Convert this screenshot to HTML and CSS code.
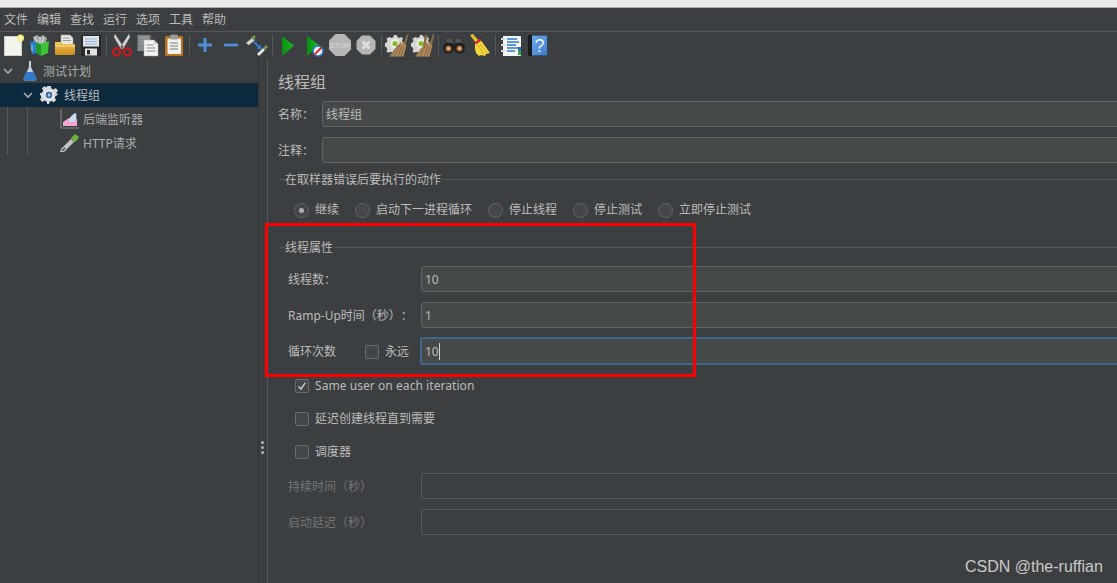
FILE: index.html
```html
<!DOCTYPE html>
<html lang="zh">
<head>
<meta charset="utf-8">
<title>Apache JMeter</title>
<link rel="stylesheet" href="styles.css">
</head>
<body>
<svg class="defs" aria-hidden="true">
  <defs>
    <linearGradient id="gPlay" x1="0" y1="0" x2="1" y2="0"><stop offset="0" stop-color="#0a8f14"/><stop offset="1" stop-color="#12b81e"/></linearGradient>
    <linearGradient id="gFolder" x1="0" y1="0" x2="0" y2="1"><stop offset="0" stop-color="#f5c75a"/><stop offset="1" stop-color="#c98a1c"/></linearGradient>
    <linearGradient id="gHelp" x1="0" y1="0" x2="1" y2="1"><stop offset="0" stop-color="#6ea6ea"/><stop offset="1" stop-color="#3f7fd0"/></linearGradient>
    <symbol id="gearBroom" viewBox="0 0 24 24">
      <path d="M9 2l2.500 0 1 2 2 1 2-1 1.500 1.500-1 2 1 2 2 1v3l-2 .8-1 2 .8 2-2 1.500-2-1-2 .8-.8 2h-3l-.8-2-2-.8-2 1-1.800-1.500 1-2-.8-2-2-.8v-3l2-1 .8-2-1-2L4.500 4l2 1 2-1z" fill="#d6d6d2"/>
      <circle cx="10" cy="10.500" r="4.500" fill="#eeeeea"/>
      <circle cx="10" cy="10.500" r="2.600" fill="#7fc02c"/>
      <path d="M18 12L22 1l1.500.5-3 11.500z" fill="#8a6a44"/>
    </symbol>
    <symbol id="bristle" viewBox="0 0 24 24">
      <path d="M15.500 9l6 3.500-3 11H4z" fill="#b08a5e"/>
      <path d="M15 12l-6 11M17 13l-4 10M19 14l-3 9M13 12l-7 11" stroke="#7c5c38" stroke-width=".8" fill="none"/>
    </symbol>
  </defs>
</svg>

<div class="app">
  <div class="topstrip"></div>

  <nav class="menubar">
    <span class="menu-item">文件</span>
    <span class="menu-item">编辑</span>
    <span class="menu-item">查找</span>
    <span class="menu-item">运行</span>
    <span class="menu-item">选项</span>
    <span class="menu-item">工具</span>
    <span class="menu-item">帮助</span>
  </nav>

  <div class="toolbar">
    <span class="tool"><svg class="ic" viewBox="0 0 24 24"><rect x="3.500" y="3.500" width="17" height="19" fill="#f4f4ee" stroke="#cfcfc8"/><circle cx="19.500" cy="5" r="3.500" fill="#f7ef7a"/><circle cx="19.500" cy="5" r="1.600" fill="#fffbd0"/><path d="M5.500 8v.1M5.500 18v.1" stroke="#999" stroke-width="1.500"/></svg></span>
    <span class="tool"><svg class="ic" viewBox="0 0 24 24"><path d="M6 4l4-2 3 2 3-2 4 3-2 8H8z" fill="#9ea8a4"/><path d="M8 4l2 5M13 4v6M17 4l-2 6" stroke="#d8dcda" stroke-width="1.200"/><path d="M3 9l6-1 1 12-5 1z" fill="#2a7fc9"/><path d="M9 10l5 1 0 12-5-3z" fill="#1f9a2e"/><path d="M14 11l8-3-1 12-7 3z" fill="#3fc23a"/><path d="M5 12v6" stroke="#99d0f5" stroke-width="1.200"/></svg></span>
    <span class="tool"><svg class="ic" viewBox="0 0 24 24"><path d="M8 2h9l3 3v7H8z" fill="#e9e9e4" stroke="#a8a8a0" stroke-width=".6"/><path d="M10 5h7M10 7.500h8" stroke="#888" stroke-width=".8"/><path d="M2 9h6l2 2h12v10a1 1 0 0 1-1 1H3a1 1 0 0 1-1-1z" fill="url(#gFolder)"/><path d="M2 13h20" stroke="#f9dc8a" stroke-width="1"/></svg></span>
    <span class="tool"><svg class="ic" viewBox="0 0 24 24"><rect x="2" y="2" width="20" height="21" rx="1.500" fill="#26282a"/><rect x="4" y="3" width="16" height="10.500" fill="#dfe6ee"/><path d="M6 6h12M6 8.500h12M6 11h12" stroke="#8fb0d4" stroke-width="1"/><rect x="6" y="15.500" width="12" height="7" fill="#e2e2e2"/><rect x="8" y="17" width="3" height="4.500" fill="#2a2a2a"/></svg></span>
    <span class="tool-sep"></span>
    <span class="tool"><svg class="ic" viewBox="0 0 24 24"><path d="M5 1l8.500 13-2.500 2L4 4zM19 1l-8.500 13 2.500 2L20 4z" fill="#d8d8d8" stroke="#8a8a8a" stroke-width=".5"/><circle cx="6.500" cy="19" r="3.600" fill="none" stroke="#c8181c" stroke-width="2.200"/><circle cx="17.500" cy="19" r="3.600" fill="none" stroke="#c8181c" stroke-width="2.200"/><path d="M10 15l-2 1.500M14 15l2 1.500" stroke="#c8181c" stroke-width="2"/></svg></span>
    <span class="tool"><svg class="ic" viewBox="0 0 24 24"><rect x="1.500" y="2" width="13" height="16" fill="#85888a"/><path d="M3.500 5h9M3.500 8h9M3.500 11h9" stroke="#a4a7a9"/><path d="M8 7h10l4 4v12H8z" fill="#f2f2f0" stroke="#a9a9a9" stroke-width=".5"/><path d="M18 7v4h4z" fill="#c8c8c8"/><path d="M10.500 12h7M10.500 15h9M10.500 18h9" stroke="#8a8a8a" stroke-width="1"/></svg></span>
    <span class="tool"><svg class="ic" viewBox="0 0 24 24"><rect x="3" y="3" width="18" height="20" rx="1" fill="#b9711c"/><rect x="5.500" y="5.500" width="13.500" height="15.500" fill="#f2f2ee"/><rect x="8" y="1.500" width="8" height="5" rx="1.500" fill="#9a9a98"/><path d="M8 10h8M8 13h8M8 16h8" stroke="#7a7a7a"/></svg></span>
    <span class="tool-sep"></span>
    <span class="tool"><svg class="ic" viewBox="0 0 24 24"><path d="M12 5v14M5 12h14" stroke="#4f8fd8" stroke-width="3"/></svg></span>
    <span class="tool"><svg class="ic" viewBox="0 0 24 24"><path d="M5 12h14" stroke="#4f8fd8" stroke-width="2.800"/></svg></span>
    <span class="tool"><svg class="ic" viewBox="0 0 24 24"><path d="M1 10l6-5 3 2-6 5z" fill="#d4d4d4"/><path d="M6 5l3-3 2 2-3 3z" fill="#6f9f4a"/><path d="M12 21l6-6 2 2-6 6z" fill="#e4e4e4"/><path d="M18 15l3-3 2 2-3 3z" fill="#6f9f4a"/><path d="M9 9l6 6" stroke="#2e7fd8" stroke-width="1.800"/><path d="M16.500 16.500l-5-1 4-4z" fill="#2e7fd8"/></svg></span>
    <span class="tool-sep"></span>
    <span class="tool"><svg class="ic" viewBox="0 0 24 24"><path d="M6 3l12 9.500L6 23z" fill="url(#gPlay)"/></svg></span>
    <span class="tool"><svg class="ic" viewBox="0 0 24 24"><path d="M5 3l12 9-12 11z" fill="url(#gPlay)"/><circle cx="16" cy="18" r="5" fill="#e8f0fa" stroke="#2f74c8" stroke-width="1.500"/><path d="M12.500 21.500l7-7" stroke="#d8262a" stroke-width="1.800"/></svg></span>
    <span class="tool"><svg class="ic" viewBox="0 0 24 24"><path d="M7.500 1h9L23 7.500v9L16.500 23h-9L1 16.500v-9z" fill="#b5b5b5"/><text x="12" y="14.800" class="stop-text">STOP</text></svg></span>
    <span class="tool"><svg class="ic" viewBox="0 0 24 24"><path d="M8 2.500h8L21.500 8v8L16 21.500H8L2.500 16V8z" fill="#b5b5b5"/><path d="M8.500 8.500l7 7M15.500 8.500l-7 7" stroke="#dedede" stroke-width="3"/></svg></span>
    <span class="tool-sep"></span>
    <span class="tool"><svg class="ic" viewBox="0 0 24 24"><use href="#gearBroom"/><use href="#bristle"/></svg></span>
    <span class="tool"><svg class="ic" viewBox="0 0 24 24"><use href="#gearBroom"/><use href="#bristle"/><path d="M14 2l3 0-3 11-2-1z" fill="#8a6a44"/></svg></span>
    <span class="tool-sep"></span>
    <span class="tool"><svg class="ic" viewBox="0 0 24 24"><rect x="5" y="6" width="5" height="4" fill="#555"/><rect x="14" y="6" width="5" height="4" fill="#555"/><rect x="9" y="10" width="6" height="4" fill="#333"/><circle cx="6.500" cy="15" r="5.500" fill="#1d1d1d"/><circle cx="17.500" cy="15" r="5.500" fill="#1d1d1d"/><circle cx="6.500" cy="15.500" r="3" fill="#a86a34"/><circle cx="17.500" cy="15.500" r="3" fill="#a86a34"/><circle cx="6.500" cy="15.500" r="1.400" fill="#e0c0a0"/><circle cx="17.500" cy="15.500" r="1.400" fill="#e0c0a0"/></svg></span>
    <span class="tool"><svg class="ic" viewBox="0 0 24 24"><path d="M2 2l3-1 6 7-3 2z" fill="#e8c22c"/><path d="M7 10l5-4 10 14-4 1-1 2-4-1-2 1-3-3-1-4z" fill="#f2d73a"/><path d="M6.500 9.500l5.500-4 1.500 2-5.500 4z" fill="#d6262c"/><path d="M10 12l6 10M12 11l7 9" stroke="#c9a420" stroke-width=".8"/></svg></span>
    <span class="tool-sep"></span>
    <span class="tool"><svg class="ic" viewBox="0 0 24 24"><rect x="4" y="3" width="18" height="20" fill="#f6f6f6"/><path d="M2 6h4M2 12h4M2 18h4" stroke="#ddd" stroke-width="2"/><path d="M8 6h10M8 9h12M8 12h9M8 15h11M8 18h8" stroke="#2a7ad2" stroke-width="1.300"/><rect x="19" y="14" width="3" height="4" fill="#2f6fb0"/><rect x="19" y="18" width="3" height="4" fill="#2ea84a"/></svg></span>
    <span class="tool"><svg class="ic" viewBox="0 0 24 24"><rect x="3" y="2" width="19" height="21" rx="1" fill="#191b1d"/><rect x="7" y="2.500" width="15" height="20" fill="url(#gHelp)"/><text x="14.500" y="18.500" class="help-text">?</text></svg></span>
  </div>

  <div class="body">
    <aside class="tree">
      <div class="tree-row root">
        <svg class="chev" viewBox="0 0 10 10"><path d="M1 3l4 4 4-4" fill="none" stroke="#a9adb0" stroke-width="1.600"/></svg>
        <svg class="node-ic" viewBox="0 0 20 20"><path d="M9 0h2v6l5 11a1.500 1.500 0 0 1-1.500 2.500h-9A1.500 1.500 0 0 1 4 17L9 6z" fill="#c7d2dc"/><path d="M6.500 11h7l2.500 6a1.500 1.500 0 0 1-1.500 2.500h-9A1.500 1.500 0 0 1 4 17z" fill="#2f78d0"/></svg>
        <span class="node-label">测试计划</span>
      </div>
      <div class="tree-row selected">
        <svg class="chev" viewBox="0 0 10 10"><path d="M1 3l4 4 4-4" fill="none" stroke="#a9adb0" stroke-width="1.600"/></svg>
        <svg class="node-ic" viewBox="0 0 20 20"><path d="M8 0h4l.7 2.800 2.400 1 2.400-1.500 2.400 2.900-1.700 2.200.8 2.400L20 8v2l-2.700.8-.8 2.400 1.500 2.300-2.700 2.600-2.300-1.500-2.300 1L10 20H8l-.7-2.800-2.400-1-2.300 1.500L0 15l1.500-2.300-.8-2.400L0 10V8l2.700-.8.800-2.400L2 2.500 4.900.3l2.300 1.500z" fill="#d9dadb"/><circle cx="10" cy="10" r="5.500" fill="#f2f3f3"/><circle cx="10" cy="10" r="3.800" fill="#3f6fa8"/><path d="M9 8l3 2-3 2z" fill="#cfe0f2"/></svg>
        <span class="node-label">线程组</span>
      </div>
      <div class="tree-row lvl2 guide">
        <svg class="node-ic" viewBox="0 0 20 20"><path d="M1 0v19h18" fill="none" stroke="#8a8a8a" stroke-width="1"/><path d="M3 17v-4l6-4 3 2 5-1v7z" fill="#f2a6d4"/><path d="M9 12c0-4 4-7 7-8 1 4 0 9-3 9-2 0-4 0-4-1z" fill="#c9dcf2"/></svg>
        <span class="node-label">后端监听器</span>
      </div>
      <div class="tree-row lvl2 guide">
        <svg class="node-ic" viewBox="0 0 20 20"><path d="M0 19l1-3L11 6l3 3L4 19z" fill="#c4c4c4"/><path d="M2 18l3-3" stroke="#444" stroke-width="1.500"/><path d="M11 5l2-2 2-2 4 3-2 3-2 2-1 0z" fill="#6fb23a"/></svg>
        <span class="node-label">HTTP请求</span>
      </div>
    </aside>

    <div class="splitter"><span class="grip"></span><span class="grip"></span><span class="grip"></span></div>

    <main class="panel">
      <h1 class="title">线程组</h1>

      <div class="name-row">
        <label class="name-label">名称：</label>
        <div class="input">线程组</div>
      </div>
      <div class="name-row gap10">
        <label class="name-label">注释：</label>
        <div class="input"></div>
      </div>

      <div class="legend first-legend"><span class="legend-text">在取样器错误后要执行的动作</span></div>

      <div class="radios">
        <span class="radio-item"><span class="radio on"></span>继续</span>
        <span class="radio-item"><span class="radio"></span>启动下一进程循环</span>
        <span class="radio-item"><span class="radio"></span>停止线程</span>
        <span class="radio-item"><span class="radio"></span>停止测试</span>
        <span class="radio-item"><span class="radio"></span>立即停止测试</span>
      </div>

      <div class="legend second-legend"><span class="legend-text">线程属性</span></div>

      <div class="prop-row top11">
        <label class="prop-label">线程数：</label>
        <div class="input">10</div>
      </div>
      <div class="prop-row gap10">
        <label class="prop-label">Ramp-Up时间（秒）：</label>
        <div class="input">1</div>
      </div>
      <div class="prop-row tall">
        <div class="loop-label">
          <span class="loop-text">循环次数</span>
          <span class="check"></span>
          <span class="forever">永远</span>
        </div>
        <div class="input focused"><span class="caret">10</span></div>
      </div>

      <div class="check-row first-check">
        <span class="check"><svg viewBox="0 0 14 14" class="tick"><path d="M3 7.500l2.800 3L11 3" fill="none" stroke="#c4c4c4" stroke-width="1.700"/></svg></span>
        <span class="check-text">Same user on each iteration</span>
      </div>
      <div class="check-row second-check">
        <span class="check"></span>
        <span>延迟创建线程直到需要</span>
      </div>
      <div class="check-row third-check">
        <span class="check"></span>
        <span>调度器</span>
      </div>

      <div class="prop-row disabled top13">
        <label class="prop-label">持续时间（秒）</label>
        <div class="input"></div>
      </div>
      <div class="prop-row disabled gap10">
        <label class="prop-label">启动延迟（秒）</label>
        <div class="input"></div>
      </div>
    </main>
  </div>

  <div class="highlight-box"></div>
  <div class="watermark">CSDN @the-ruffian</div>
</div>
</body>
</html>
```
FILE: styles.css
```css
* { box-sizing: border-box; }

html, body {
  margin: 0;
  padding: 0;
  width: 100%;
  height: 100%;
  overflow: hidden;
  background: #3c3f41;
}

body {
  color: #bbbbbb;
  font: 12px/16px "Noto Sans", "Noto Sans CJK SC", sans-serif;
  text-spacing-trim: space-all;
}

.defs { display: block; width: 0; height: 0; }

.app {
  position: relative;
  display: flex;
  flex-direction: column;
  height: 583px;
  overflow: hidden;
}

.topstrip {
  height: 8px;
  background: #ececec;
  border-bottom: 1px solid #a9a9a9;
}

.menubar {
  display: flex;
  height: 24px;
  padding: 4px 0 0 4px;
  gap: 9px;
  border-bottom: 1px solid #54585a;
}
.menu-item { width: 24px; white-space: nowrap; }

.toolbar {
  display: flex;
  align-items: center;
  height: 27px;
  border-bottom: 1px solid #383a3c;
}
.tool {
  flex: 0 0 26px;
  display: flex;
  justify-content: center;
  align-items: center;
  height: 26px;
}
.tool-sep {
  flex: 0 0 5px;
  height: 20px;
  padding-left: 2px;
}
.tool-sep::before {
  content: "";
  display: block;
  width: 1px;
  height: 100%;
  background: #55585a;
}
.ic { width: 24px; height: 24px; display: block; }
.stop-text {
  font: bold 8px "Liberation Sans", sans-serif;
  fill: #cfcfcf;
  text-anchor: middle;
}
.help-text {
  font: 18px "Liberation Sans", sans-serif;
  fill: #eef4fb;
  text-anchor: middle;
}

.body {
  flex: 1;
  display: flex;
  min-height: 0;
}

.tree {
  flex: 0 0 259px;
  border-right: 1px solid #2f3133;
  display: flex;
  flex-direction: column;
}
.tree-row {
  display: flex;
  align-items: center;
  height: 24px;
  padding-left: 3px;
  white-space: nowrap;
  color: #a9adb0;
}
.chev { width: 10px; height: 10px; flex: none; }
.node-ic { width: 20px; height: 20px; flex: none; }
.node-label { padding-top: 2px; }
.root .node-ic { margin-left: 7px; }
.root .node-label { margin-left: 3px; }
.selected {
  background: #0d293e;
  padding-left: 23px;
  color: #bbbbbb;
}
.selected .node-ic { width: 18px; height: 18px; margin-left: 7px; }
.selected .node-label { margin-left: 6px; }
.lvl2 { padding-left: 60px; }
.lvl2 .node-label { margin-left: 3px; }
.guide {
  background:
    linear-gradient(#55585a, #55585a) 7px 0 / 1px 100% no-repeat,
    linear-gradient(#55585a, #55585a) 27px 0 / 1px 100% no-repeat;
}

.splitter {
  flex: 0 0 9px;
  display: flex;
  flex-direction: column;
  align-items: center;
  gap: 2px;
  padding-top: 382px;
  padding-right: 1px;
  border-right: 1px solid #55585a;
}
.grip {
  display: block;
  width: 3px;
  height: 3px;
  border-radius: 50%;
  background: #b0b0b0;
}

.panel {
  flex: 1;
  min-width: 0;
  overflow: hidden;
  padding: 12px 0 0 10px;
}

.title {
  margin: 0 0 8px;
  font-size: 16px;
  line-height: 22px;
  font-weight: 400;
  color: #bbbbbb;
}

.input {
  flex: 1;
  height: 26px;
  margin-right: -10px;
  padding-left: 3px;
  background: #45494a;
  border: 1px solid #646464;
  border-radius: 3px;
  line-height: 26px;
}

.name-row, .prop-row { display: flex; align-items: center; }
.name-label { flex: 0 0 44px; padding-top: 2px; }
.gap10 { margin-top: 10px; }
.top11 { margin-top: 11px; }
.top13 { margin-top: 13px; }

.legend {
  display: flex;
  align-items: center;
  height: 16px;
  margin-left: 2px;
}
.legend::before {
  content: "";
  width: 5px;
  height: 1px;
  background: #55585a;
}
.legend::after {
  content: "";
  flex: 1;
  height: 1px;
  background: #55585a;
}
.legend-text { padding: 2px 1px 0 0; }
.first-legend { margin-top: 8px; }
.second-legend { margin-top: 21px; }

.radios {
  display: flex;
  gap: 16px;
  margin: 15px 0 0 16px;
}
.radio-item { display: flex; align-items: center; gap: 6px; white-space: nowrap; }
.radio {
  width: 15px;
  height: 15px;
  border-radius: 50%;
  background: #43474a;
  border: 1px solid #626567;
  position: relative;
}
.radio.on::after {
  content: "";
  position: absolute;
  left: 4px;
  top: 4px;
  width: 5px;
  height: 5px;
  border-radius: 50%;
  background: #b0b0b0;
}

.prop-row { padding-left: 10px; }
.prop-label { flex: 0 0 133px; white-space: nowrap; padding-top: 2px; }
.loop-label { flex: 0 0 133px; display: flex; align-items: center; white-space: nowrap; padding-top: 1px; }
.loop-text { width: 77px; }
.forever { margin-left: 6px; }
.tall { margin-top: 9px; }
.focused {
  height: 28px;
  margin-left: -1px;
  border: 2px solid #41668c;
  line-height: 25px;
}
.caret { border-right: 1px solid #d0d0d0; }

.check {
  flex: none;
  width: 14px;
  height: 14px;
  background: #43474a;
  border: 1px solid #6b6b6b;
  border-radius: 2px;
  display: block;
}
.tick { display: block; width: 12px; height: 12px; }

.check-row {
  display: flex;
  align-items: center;
  gap: 6px;
  height: 16px;
  margin-left: 17px;
}
.check-text { letter-spacing: .005em; }
.first-check { margin-top: 13px; }
.second-check { margin-top: 17px; }
.third-check { margin-top: 17px; }

.disabled { color: #737678; }
.disabled .input { background: #3c3f41; border-color: #565859; }

.highlight-box {
  position: absolute;
  left: 265px;
  top: 223px;
  width: 431px;
  height: 154px;
  border: 3px solid #ff0000;
  pointer-events: none;
}

.watermark {
  position: absolute;
  left: 965px;
  top: 558px;
  color: #c9c9c9;
  font: 16px/18px "Liberation Sans", sans-serif;
  white-space: nowrap;
}
```
